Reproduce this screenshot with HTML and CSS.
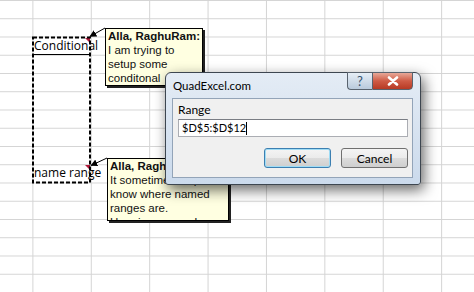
FILE: index.html
```html
<!DOCTYPE html>
<html lang="en">
<head>
    <meta charset="UTF-8">
    <meta name="viewport" content="width=device-width, initial-scale=1.0">
    <title>QuadExcel - Range</title>
    <link rel="stylesheet" href="styles.css">
</head>
<body>
    <div class="sheet">
        <div class="cell cell-cond has-note">Conditional</div>
        <div class="cell cell-name has-note">name range</div>
    </div>

    <svg class="marks" width="474" height="292" viewBox="0 0 474 292">
        <defs>
            <marker id="head" viewBox="0 0 10 10" refX="9" refY="5" markerWidth="7" markerHeight="7" orient="auto">
                <path d="M0 0 L10 5 L0 10 z" fill="#000"/>
            </marker>
        </defs>
        <!-- copy marquee -->
        <rect x="33" y="37.5" width="57" height="145" fill="none" stroke="#000" stroke-width="2" stroke-dasharray="4 2"/>
        <line x1="105" y1="28" x2="90" y2="36.5" stroke="#000" stroke-width="1" marker-end="url(#head)"/>
        <line x1="107" y1="158" x2="91" y2="165.5" stroke="#000" stroke-width="1" marker-end="url(#head)"/>
    </svg>

    <div class="note note-1">
        <b>Alla, RaghuRam:</b><br>
        I am trying to<br>
        setup some<br>
        conditonal
    </div>

    <div class="note note-2">
        <b>Alla, RaghuRam:</b><br>
        It sometimes helps to<br>
        know where named<br>
        ranges are.<br>
        Here is a macro I use.
    </div>

    <div class="dialog">
        <div class="titlebar">
            <span class="title">QuadExcel.com</span>
            <div class="caption-btns">
                <span class="cap cap-help">?</span>
                <span class="cap cap-close">
                    <svg width="12" height="10" viewBox="0 0 12 10">
                        <path d="M2 1.5 L10 8.5 M10 1.5 L2 8.5" stroke="#fff" stroke-width="2.6" stroke-linecap="round"/>
                    </svg>
                </span>
            </div>
        </div>
        <div class="client">
            <label for="rng">Range</label>
            <div class="field" id="rng">$D$5:$D$12<span class="caret"></span></div>
            <div class="buttons">
                <button class="btn btn-default">OK</button>
                <button class="btn">Cancel</button>
            </div>
        </div>
    </div>
</body>
</html>
```

FILE: styles.css
```css
body {
    margin: 0;
    width: 474px;
    height: 292px;
    overflow: hidden;
    background: #fff;
    position: relative;
}
.sheet {
    display: grid;
    grid-template-columns: repeat(9, 58.4px);
    grid-template-rows: repeat(16, 18.25px);
    margin-left: -26.4px;
    background-image:
        linear-gradient(to right, #d4d4d4 1px, transparent 1px),
        linear-gradient(to bottom, #d4d4d4 1px, transparent 1px);
    background-size: 58.4px 18.25px;
}
.cell {
    grid-column: 2;
    position: relative;
    padding-left: 2px;
    font-family: "Open Sans", sans-serif;
    font-size: 12px;
    line-height: 18px;
    color: #000;
    white-space: nowrap;
}
.cell-cond {
    grid-row: 3;
    border-bottom: 1px solid #000;
}
.cell-name {
    grid-row: 10;
}
.has-note::after {
    content: "";
    position: absolute;
    top: 1px;
    right: 0;
    border-left: 5px solid transparent;
    border-top: 5px solid #b0183a;
}
.marks {
    position: absolute;
    left: 0;
    top: 0;
}
.note {
    position: absolute;
    background: #ffffe1;
    border: 1px solid #000;
    box-shadow: 2px 2px 0 #222;
    padding: 0 2px;
    font-family: "Liberation Sans", sans-serif;
    font-size: 11.5px;
    line-height: 14px;
    color: #111;
    white-space: nowrap;
    overflow: hidden;
}
.note-1 {
    left: 105px;
    top: 28px;
    width: 92px;
    height: 56px;
}
.note-2 {
    left: 107px;
    top: 158px;
    width: 116px;
    height: 61px;
}
.dialog {
    position: absolute;
    left: 165px;
    top: 72px;
    width: 256px;
    height: 113px;
    box-sizing: border-box;
    border: 1px solid #3d4650;
    border-radius: 6px 6px 3px 3px;
    background: linear-gradient(#e4ecf5, #cbdaec);
    box-shadow: 3px 5px 14px rgba(0, 0, 0, 0.6);
    display: flex;
    flex-direction: column;
    font-family: "Lato", sans-serif;
    font-size: 12px;
    color: #000;
}
.titlebar {
    display: flex;
    height: 26px;
    margin-top: -1px;
}
.title {
    margin: 7px 0 0 7px;
    font-size: 11.5px;
}
.caption-btns {
    display: flex;
    margin-left: auto;
    margin-right: 7px;
    height: 18px;
}
.cap {
    display: flex;
    align-items: center;
    justify-content: center;
    border: 1px solid #59636e;
    box-sizing: border-box;
}
.cap-help {
    width: 25px;
    border-radius: 0 0 0 4px;
    border-right: none;
    background: linear-gradient(#e6eef6, #b9cadc);
    color: #34506d;
    font-size: 13px;
}
.cap-close {
    width: 41px;
    border-radius: 0 0 4px 0;
    background: linear-gradient(#e7a898, #cf5b45 50%, #b73a24);
}
.client {
    flex: 1;
    margin: 0 7px 6px 6px;
    border: 1px solid #93a4b8;
    background: #f0f0f0;
    padding: 4px 4px 8px 5px;
    display: flex;
    flex-direction: column;
}
.client label {
    line-height: 14px;
}
.field {
    margin-top: 2px;
    height: 18px;
    box-sizing: border-box;
    border: 1px solid #abadb3;
    border-top-color: #7a7d84;
    background: #fff;
    padding: 0 3px;
    font-size: 11px;
    line-height: 16px;
    display: flex;
    align-items: center;
}
.caret {
    width: 1px;
    height: 13px;
    background: #000;
}
.buttons {
    display: flex;
    justify-content: flex-end;
    gap: 10px;
    margin-top: 11px;
}
.btn {
    width: 67px;
    height: 20px;
    padding: 0;
    border: 1px solid #707070;
    border-radius: 3px;
    background: linear-gradient(#f4f4f4 0%, #ebebeb 50%, #dcdcdc 51%, #cfcfcf 100%);
    font-family: "Lato", sans-serif;
    font-size: 12px;
    color: #000;
}
.btn-default {
    border-color: #3c7fb1;
    box-shadow: inset 0 0 0 1px #9fdcf5;
}
```
